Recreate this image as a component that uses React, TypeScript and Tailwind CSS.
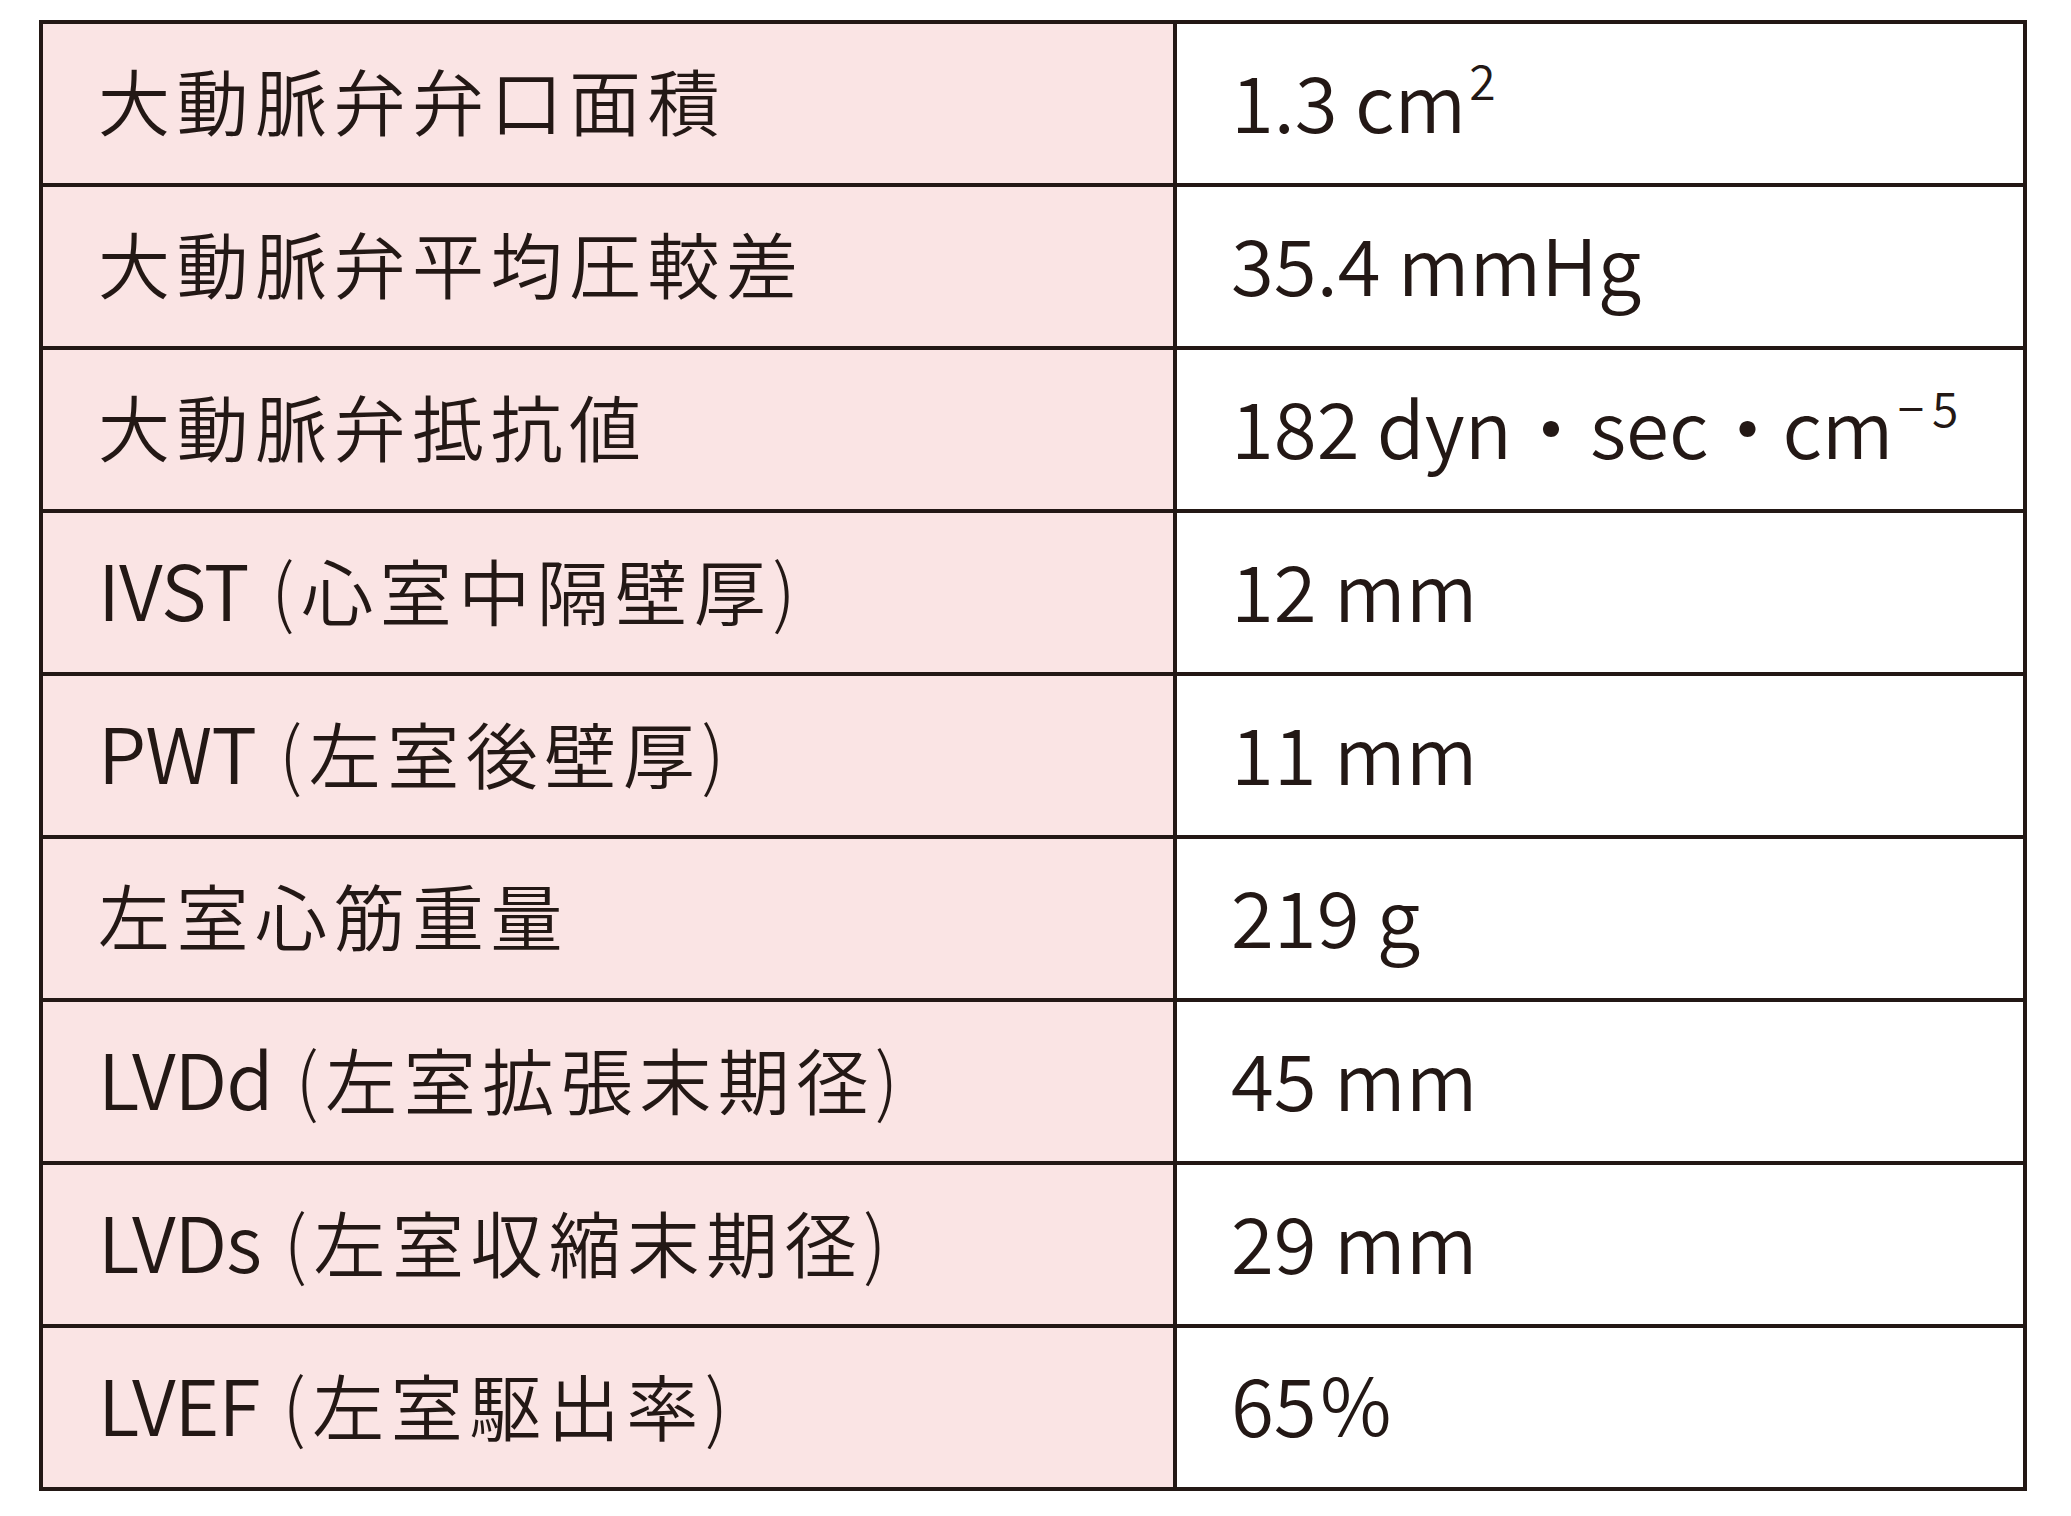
import React from "react"

type Row = {
  latin?: string
  jp: string
  paren?: boolean
  value: React.ReactNode
}

const rows: Row[] = [
  {
    jp: "大動脈弁弁口面積",
    value: (
      <>
        1.3 cm<sup className="relative top-[-6px] ml-[3px] text-[48px] align-super leading-none">2</sup>
      </>
    ),
  },
  { jp: "大動脈弁平均圧較差", value: "35.4 mmHg" },
  {
    jp: "大動脈弁抵抗値",
    value: (
      <>
        182 dyn・sec<span className="-mr-[4px]">・</span>cm
        <sup className="relative top-[-5px] ml-[4px] text-[48px] align-super leading-none">
          −<span className="ml-[8px]">5</span>
        </sup>
      </>
    ),
  },
  { latin: "IVST", jp: "心室中隔壁厚", paren: true, value: "12 mm" },
  { latin: "PWT", jp: "左室後壁厚", paren: true, value: "11 mm" },
  { jp: "左室心筋重量", value: "219 g" },
  { latin: "LVDd", jp: "左室拡張末期径", paren: true, value: "45 mm" },
  { latin: "LVDs", jp: "左室収縮末期径", paren: true, value: "29 mm" },
  { latin: "LVEF", jp: "左室駆出率", paren: true, value: "65％" },
]

export default function App() {
  return (
    <main className="min-h-screen bg-white text-[#231815] font-[350] font-['Noto_Sans_CJK_JP','Noto_Sans',sans-serif]">
      <div className="pt-[20px] pl-[39px]">
        <div className="w-[1988px] border-4 border-[#231815] flex flex-col">
          {rows.map((row, index) => (
            <div
              key={index}
              className={
                index === 0
                  ? "flex h-[159px]"
                  : "flex h-[163px] border-t-4 border-[#231815]"
              }
            >
              <div className="w-[1134px] shrink-0 border-r-4 border-[#231815] bg-[#fae4e4] flex items-center pl-[55px] pb-[10px] whitespace-pre">
                {row.latin && (
                  <span className="text-[77px] leading-none tracking-[-1px]">{row.latin}</span>
                )}
                <span className="text-[72px] leading-none tracking-[6.5px]">
                  {row.paren ? (
                    <>
                      {" "}
                      <span className="font-light text-[75px]">(</span>
                      {row.jp}
                      <span className="font-light text-[75px]">)</span>
                    </>
                  ) : (
                    row.jp
                  )}
                </span>
              </div>
              <div className="flex-1 flex items-center pl-[54px] pb-[10px] whitespace-nowrap">
                <span className="text-[78px] leading-none">{row.value}</span>
              </div>
            </div>
          ))}
        </div>
      </div>
    </main>
  )
}
